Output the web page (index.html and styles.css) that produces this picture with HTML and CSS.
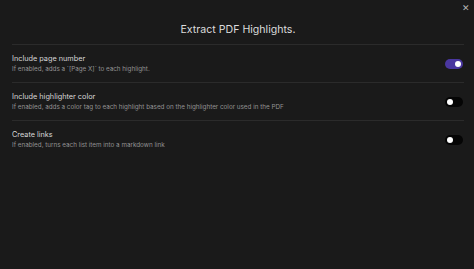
FILE: index.html
```html
<!DOCTYPE html>
<html lang="en">
<head>
  <meta charset="UTF-8">
  <title>Extract PDF Highlights</title>
  <link rel="stylesheet" href="styles.css">
</head>
<body>
  <div class="modal">
    <div class="close-button">&#x2715;</div>
    <h1 class="modal-title">Extract PDF Highlights.</h1>

    <div class="setting">
      <div class="setting-info">
        <div class="setting-name">Include page number</div>
        <div class="setting-desc">If enabled, adds a `[Page X]` to each highlight.</div>
      </div>
      <div class="toggle on"><div class="knob"></div></div>
    </div>

    <div class="setting">
      <div class="setting-info">
        <div class="setting-name">Include highlighter color</div>
        <div class="setting-desc">If enabled, adds a color tag to each highlight based on the highlighter color used in the PDF</div>
      </div>
      <div class="toggle"><div class="knob"></div></div>
    </div>

    <div class="setting">
      <div class="setting-info">
        <div class="setting-name">Create links</div>
        <div class="setting-desc">If enabled, turns each list item into a markdown link</div>
      </div>
      <div class="toggle"><div class="knob"></div></div>
    </div>
  </div>
</body>
</html>
```

FILE: styles.css
```css
body, html {
  margin: 0;
  padding: 0;
  height: 100%;
  background-color: #1a1a1a;
  font-family: Inter, "Noto Sans", sans-serif;
  overflow: hidden;
}

.modal {
  position: relative;
  height: 100%;
  padding: 0 10px 0 12px;
  box-sizing: border-box;
}

.close-button {
  position: absolute;
  top: 2px;
  right: 4px;
  color: #b5b5b5;
  font-size: 9px;
  line-height: 12px;
}

.modal-title {
  margin: 0;
  padding-top: 21px;
  height: 23px;
  font-size: 10.6px;
  line-height: 18px;
  font-weight: 400;
  color: #dcdcdc;
  text-align: center;
}

.setting {
  display: flex;
  align-items: center;
  height: 38px;
  border-top: 1px solid #2b2b2b;
  box-sizing: border-box;
}

.setting-info {
  flex: 1;
}

.setting-name {
  font-size: 7.3px;
  line-height: 11px;
  color: #d8d8d8;
}

.setting-desc {
  font-size: 6.3px;
  line-height: 10px;
  color: #939393;
}

.toggle {
  width: 18px;
  height: 10px;
  border-radius: 5px;
  background: #050505;
  position: relative;
  margin-right: 1px;
}

.toggle.on {
  background: #4a37a0;
}

.knob {
  position: absolute;
  top: 2px;
  left: 2px;
  width: 6px;
  height: 6px;
  border-radius: 50%;
  background: #ffffff;
}

.toggle.on .knob {
  left: 10px;
}
```
